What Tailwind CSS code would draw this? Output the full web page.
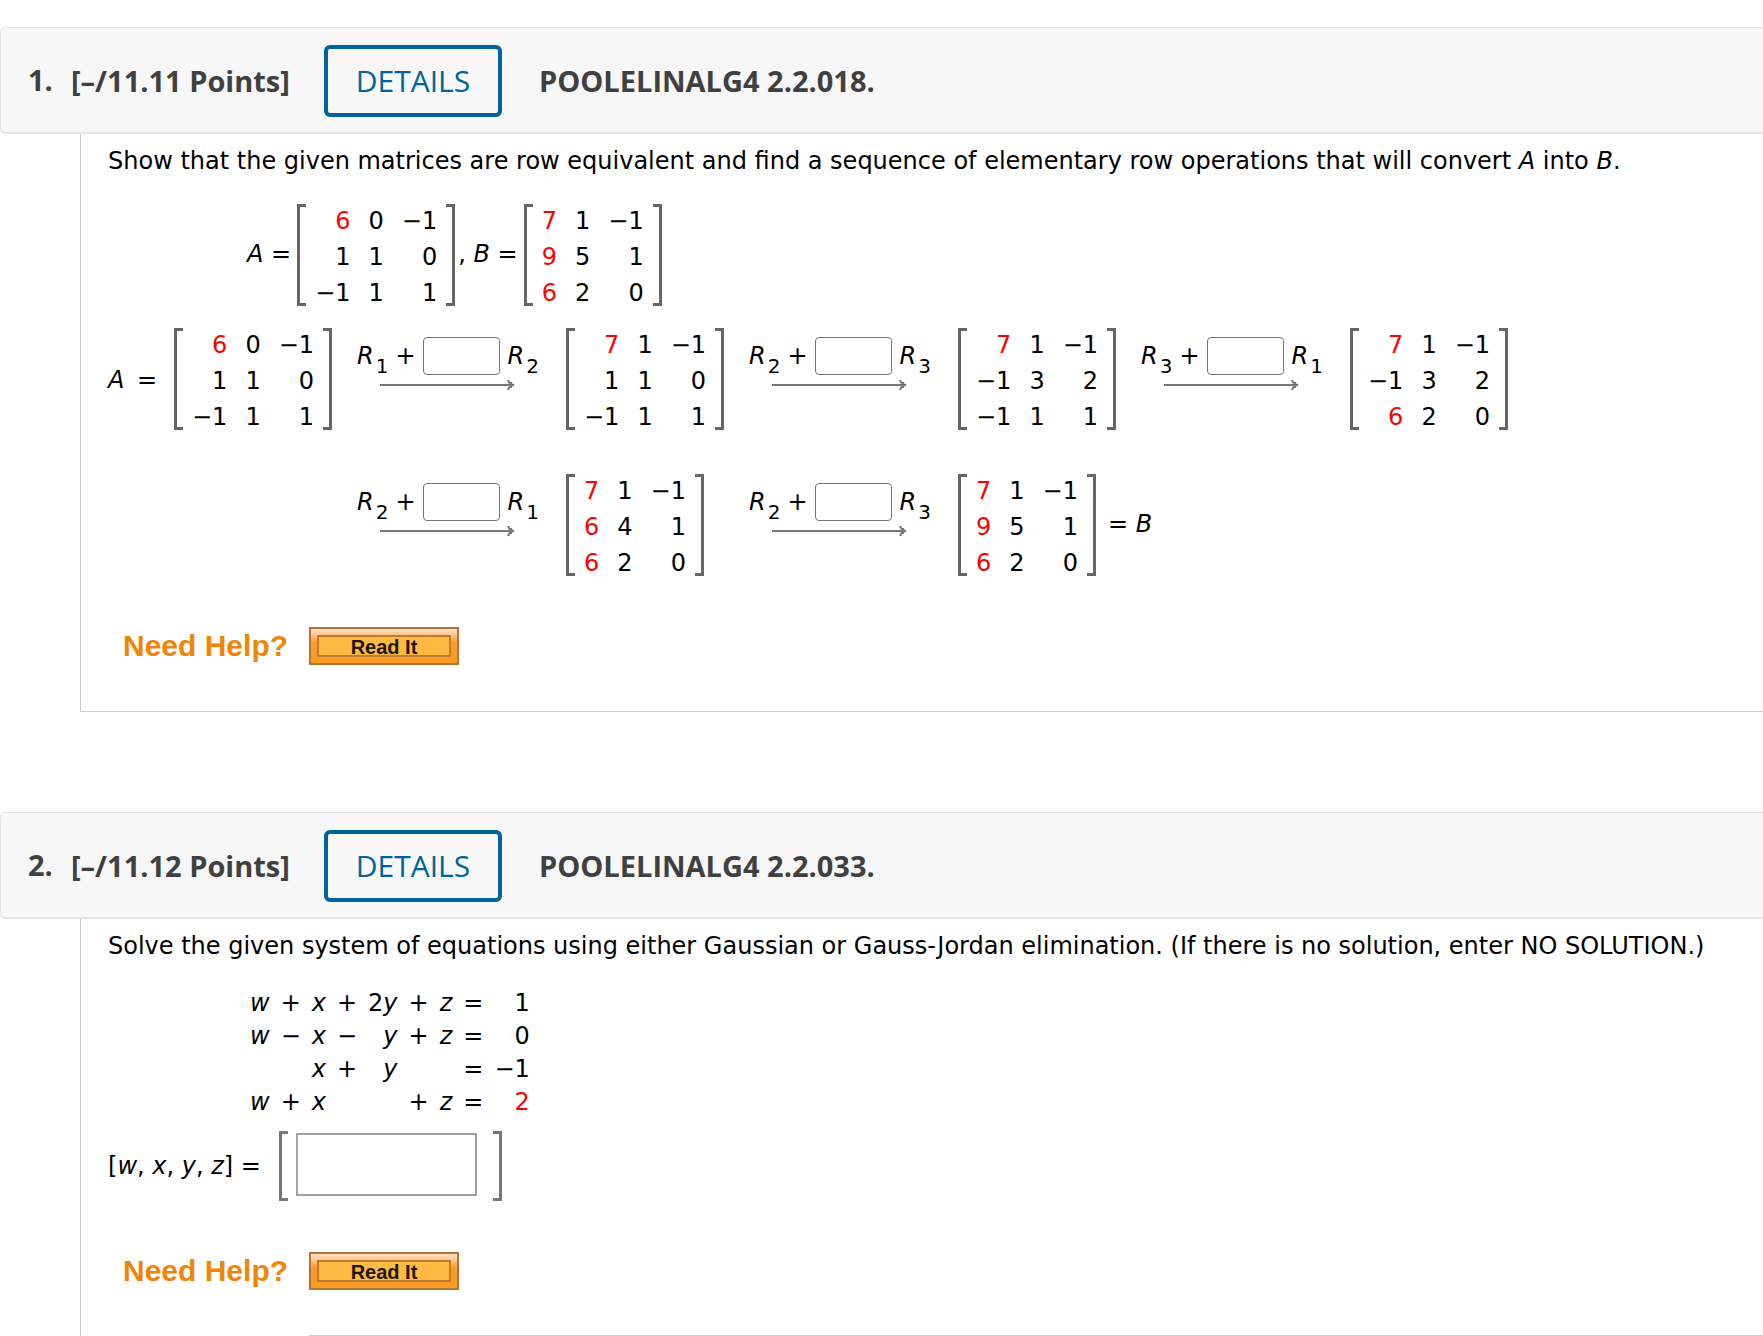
<!DOCTYPE html>
<html lang="en">
<head>
    <meta charset="UTF-8">
    <meta name="viewport" content="width=device-width, initial-scale=1.0">
    <title>Row Operations Homework</title>
    <script src="https://cdn.jsdelivr.net/npm/@tailwindcss/browser@4"></script>
</head>
<body class="bg-white text-black font-['DejaVu_Sans',Verdana,sans-serif] text-[24px] leading-[32px] overflow-x-hidden">
    <svg class="hidden">
        <symbol id="arrow" viewBox="0 0 136 12">
            <path d="M0 6H131" fill="none" stroke="#777" stroke-width="2"/>
            <path d="M128 1Q129 5 134 6Q129 7 128 11M131 3V9" fill="none" stroke="#777" stroke-width="2"/>
        </symbol>
    </svg>

    <main class="pt-[27px]">
        <!-- Question 1 -->
        <section>
            <header class="flex items-center h-[107px] pl-[27px] pt-[2px] bg-[#f7f7f7] border border-b-2 border-r-0 border-[#e4e4e4] rounded-l-[5px] font-['Open_Sans',sans-serif] text-[29px] font-bold text-[#404040] whitespace-nowrap">
                <span class="w-[43px] pb-[2px]">1.</span>
                <h2 class="w-[253px]">[–/11.11 Points]</h2>
                <button type="button" class="w-[178px] h-[72px] border-4 border-[#00639b] rounded-md text-[30px] font-normal text-[#00639b]">DETAILS</button>
                <span class="ml-[37px]">POOLELINALG4 2.2.018.</span>
            </header>
            <div class="ml-20 pl-[27px] pt-[11px] pb-[46px] border-l border-b border-[#ccc] whitespace-nowrap">
                <p>Show that the given matrices are row equivalent and find a sequence of elementary row operations that will convert <i>A</i> into <i>B</i>.</p>

                <div class="flex items-center ml-[139px] mt-[27px]">
                    <span class="mr-[6px] pb-[2px]"><i>A</i> =</span>
                    <div class="flex items-center h-[102px]">
                        <div class="w-[9px] h-full border-[3px] border-r-0 border-[#666]"></div>
                        <table class="mt-[3px] text-right leading-[36px] [&_td]:px-[9px]">
                            <tr><td class="text-[#f00]">6</td><td>0</td><td>−1</td></tr>
                            <tr><td>1</td><td>1</td><td>0</td></tr>
                            <tr><td>−1</td><td>1</td><td>1</td></tr>
                        </table>
                        <div class="w-[9px] h-full border-[3px] border-l-0 border-[#666]"></div>
                    </div>
                    <span class="ml-[3px] mr-[6px] pb-[2px]">, <i>B</i> =</span>
                    <div class="flex items-center h-[102px]">
                        <div class="w-[9px] h-full border-[3px] border-r-0 border-[#666]"></div>
                        <table class="mt-[3px] text-right leading-[36px] [&_td]:px-[9px]">
                            <tr><td class="text-[#f00]">7</td><td>1</td><td>−1</td></tr>
                            <tr><td class="text-[#f00]">9</td><td>5</td><td>1</td></tr>
                            <tr><td class="text-[#f00]">6</td><td>2</td><td>0</td></tr>
                        </table>
                        <div class="w-[9px] h-full border-[3px] border-l-0 border-[#666]"></div>
                    </div>
                </div>

                <!-- Row reduction steps -->
                <div class="grid grid-cols-[66px_183px_209px_183px_209px_183px_209px_183px] gap-y-11 mt-[22px] items-center">
                    <span class="pt-[2px]"><i class="mr-[5px]">A</i> =</span>
                    <div class="flex items-center h-[102px]">
                        <div class="w-[9px] h-full border-[3px] border-r-0 border-[#666]"></div>
                        <table class="mt-[3px] text-right leading-[36px] [&_td]:px-[9px]">
                            <tr><td class="text-[#f00]">6</td><td>0</td><td>−1</td></tr>
                            <tr><td>1</td><td>1</td><td>0</td></tr>
                            <tr><td>−1</td><td>1</td><td>1</td></tr>
                        </table>
                        <div class="w-[9px] h-full border-[3px] border-l-0 border-[#666]"></div>
                    </div>
                    <div class="w-[182px] self-start pt-[9px]">
                        <label class="flex items-center"><i>R</i><sub class="ml-[2px] mt-[10px] text-[20px] leading-none">1</sub><span class="mx-[7px]">+</span><input type="text" aria-label="Multiple of row 2" class="w-[77px] h-[38px] mr-2 border border-[#767676] rounded-[4px]"><i>R</i><sub class="ml-[2px] mt-[10px] text-[20px] leading-none">2</sub></label>
                        <svg class="w-[136px] h-3 mx-auto mt-1"><use href="#arrow"/></svg>
                    </div>
                    <div class="flex items-center h-[102px]">
                        <div class="w-[9px] h-full border-[3px] border-r-0 border-[#666]"></div>
                        <table class="mt-[3px] text-right leading-[36px] [&_td]:px-[9px]">
                            <tr><td class="text-[#f00]">7</td><td>1</td><td>−1</td></tr>
                            <tr><td>1</td><td>1</td><td>0</td></tr>
                            <tr><td>−1</td><td>1</td><td>1</td></tr>
                        </table>
                        <div class="w-[9px] h-full border-[3px] border-l-0 border-[#666]"></div>
                    </div>
                    <div class="w-[182px] self-start pt-[9px]">
                        <label class="flex items-center"><i>R</i><sub class="ml-[2px] mt-[10px] text-[20px] leading-none">2</sub><span class="mx-[7px]">+</span><input type="text" aria-label="Multiple of row 3" class="w-[77px] h-[38px] mr-2 border border-[#767676] rounded-[4px]"><i>R</i><sub class="ml-[2px] mt-[10px] text-[20px] leading-none">3</sub></label>
                        <svg class="w-[136px] h-3 mx-auto mt-1"><use href="#arrow"/></svg>
                    </div>
                    <div class="flex items-center h-[102px]">
                        <div class="w-[9px] h-full border-[3px] border-r-0 border-[#666]"></div>
                        <table class="mt-[3px] text-right leading-[36px] [&_td]:px-[9px]">
                            <tr><td class="text-[#f00]">7</td><td>1</td><td>−1</td></tr>
                            <tr><td>−1</td><td>3</td><td>2</td></tr>
                            <tr><td>−1</td><td>1</td><td>1</td></tr>
                        </table>
                        <div class="w-[9px] h-full border-[3px] border-l-0 border-[#666]"></div>
                    </div>
                    <div class="w-[182px] self-start pt-[9px]">
                        <label class="flex items-center"><i>R</i><sub class="ml-[2px] mt-[10px] text-[20px] leading-none">3</sub><span class="mx-[7px]">+</span><input type="text" aria-label="Multiple of row 1" class="w-[77px] h-[38px] mr-2 border border-[#767676] rounded-[4px]"><i>R</i><sub class="ml-[2px] mt-[10px] text-[20px] leading-none">1</sub></label>
                        <svg class="w-[136px] h-3 mx-auto mt-1"><use href="#arrow"/></svg>
                    </div>
                    <div class="flex items-center h-[102px]">
                        <div class="w-[9px] h-full border-[3px] border-r-0 border-[#666]"></div>
                        <table class="mt-[3px] text-right leading-[36px] [&_td]:px-[9px]">
                            <tr><td class="text-[#f00]">7</td><td>1</td><td>−1</td></tr>
                            <tr><td>−1</td><td>3</td><td>2</td></tr>
                            <tr><td class="text-[#f00]">6</td><td>2</td><td>0</td></tr>
                        </table>
                        <div class="w-[9px] h-full border-[3px] border-l-0 border-[#666]"></div>
                    </div>

                    <div class="col-start-3 w-[182px] self-start pt-[9px]">
                        <label class="flex items-center"><i>R</i><sub class="ml-[2px] mt-[10px] text-[20px] leading-none">2</sub><span class="mx-[7px]">+</span><input type="text" aria-label="Multiple of row 1, second step" class="w-[77px] h-[38px] mr-2 border border-[#767676] rounded-[4px]"><i>R</i><sub class="ml-[2px] mt-[10px] text-[20px] leading-none">1</sub></label>
                        <svg class="w-[136px] h-3 mx-auto mt-1"><use href="#arrow"/></svg>
                    </div>
                    <div class="flex items-center h-[102px]">
                        <div class="w-[9px] h-full border-[3px] border-r-0 border-[#666]"></div>
                        <table class="mt-[3px] text-right leading-[36px] [&_td]:px-[9px]">
                            <tr><td class="text-[#f00]">7</td><td>1</td><td>−1</td></tr>
                            <tr><td class="text-[#f00]">6</td><td>4</td><td>1</td></tr>
                            <tr><td class="text-[#f00]">6</td><td>2</td><td>0</td></tr>
                        </table>
                        <div class="w-[9px] h-full border-[3px] border-l-0 border-[#666]"></div>
                    </div>
                    <div class="w-[182px] self-start pt-[9px]">
                        <label class="flex items-center"><i>R</i><sub class="ml-[2px] mt-[10px] text-[20px] leading-none">2</sub><span class="mx-[7px]">+</span><input type="text" aria-label="Multiple of row 3, second step" class="w-[77px] h-[38px] mr-2 border border-[#767676] rounded-[4px]"><i>R</i><sub class="ml-[2px] mt-[10px] text-[20px] leading-none">3</sub></label>
                        <svg class="w-[136px] h-3 mx-auto mt-1"><use href="#arrow"/></svg>
                    </div>
                    <div class="col-span-2 flex items-center h-[102px]">
                        <div class="w-[9px] h-full border-[3px] border-r-0 border-[#666]"></div>
                        <table class="mt-[3px] text-right leading-[36px] [&_td]:px-[9px]">
                            <tr><td class="text-[#f00]">7</td><td>1</td><td>−1</td></tr>
                            <tr><td class="text-[#f00]">9</td><td>5</td><td>1</td></tr>
                            <tr><td class="text-[#f00]">6</td><td>2</td><td>0</td></tr>
                        </table>
                        <div class="w-[9px] h-full border-[3px] border-l-0 border-[#666]"></div>
                        <span class="ml-3 pb-[2px]">= <i>B</i></span>
                    </div>
                </div>

                <div class="flex items-center ml-[15px] mt-[51px] font-['Liberation_Sans',Arial,sans-serif] font-bold">
                    <span class="w-[186px] text-[30px] text-[#ef8508]">Need Help?</span>
                    <button type="button" class="w-[150px] h-[38px] p-[6px] border-2 border-[#b9732c] bg-linear-to-b from-[#ffe3cc] to-[#f99b2f] to-40%">
                        <span class="block h-full border-2 border-[#c07a28] bg-[#fdbb44] text-[20px] leading-[20px] text-[#1f1600]">Read It</span>
                    </button>
                </div>
            </div>
        </section>

        <!-- Question 2 -->
        <section class="mt-[100px]">
            <header class="flex items-center h-[107px] pl-[27px] pt-[2px] bg-[#f7f7f7] border border-b-2 border-r-0 border-[#e4e4e4] rounded-l-[5px] font-['Open_Sans',sans-serif] text-[29px] font-bold text-[#404040] whitespace-nowrap">
                <span class="w-[43px] pb-[2px]">2.</span>
                <h2 class="w-[253px]">[–/11.12 Points]</h2>
                <button type="button" class="w-[178px] h-[72px] border-4 border-[#00639b] rounded-md text-[30px] font-normal text-[#00639b]">DETAILS</button>
                <span class="ml-[37px]">POOLELINALG4 2.2.033.</span>
            </header>
            <div class="ml-20 pl-[27px] pt-[11px] border-l border-[#ccc] whitespace-nowrap">
                <p>Solve the given system of equations using either Gaussian or Gauss-Jordan elimination. (If there is no solution, enter NO SOLUTION.)</p>

                <table class="ml-[142px] mt-[25px] text-right leading-[33px] [&_td]:pl-[11px] [&_td:first-child]:pl-0">
                    <tr><td><i>w</i></td><td>+</td><td><i>x</i></td><td>+</td><td>2<i>y</i></td><td>+</td><td><i>z</i></td><td>=</td><td>1</td></tr>
                    <tr><td><i>w</i></td><td>−</td><td><i>x</i></td><td>−</td><td><i>y</i></td><td>+</td><td><i>z</i></td><td>=</td><td>0</td></tr>
                    <tr><td></td><td></td><td><i>x</i></td><td>+</td><td><i>y</i></td><td></td><td></td><td>=</td><td>−1</td></tr>
                    <tr><td><i>w</i></td><td>+</td><td><i>x</i></td><td></td><td></td><td>+</td><td><i>z</i></td><td>=</td><td class="text-[#f00]">2</td></tr>
                </table>

                <label class="flex items-center h-[70px] mt-3">
                    <span class="w-[171px]">[<i>w</i>, <i>x</i>, <i>y</i>, <i>z</i>] =</span>
                    <span class="w-[9px] h-full border-[3px] border-r-0 border-[#777]"></span>
                    <input type="text" class="w-[181px] h-[63px] ml-2 mr-4 mb-[3px] border-2 border-[#a0a0a0]">
                    <span class="w-[9px] h-full border-[3px] border-l-0 border-[#777]"></span>
                </label>

                <div class="flex items-center ml-[15px] mt-[51px] font-['Liberation_Sans',Arial,sans-serif] font-bold">
                    <span class="w-[186px] text-[30px] text-[#ef8508]">Need Help?</span>
                    <button type="button" class="w-[150px] h-[38px] p-[6px] border-2 border-[#b9732c] bg-linear-to-b from-[#ffe3cc] to-[#f99b2f] to-40%">
                        <span class="block h-full border-2 border-[#c07a28] bg-[#fdbb44] text-[20px] leading-[20px] text-[#1f1600]">Read It</span>
                    </button>
                </div>
                <hr class="ml-[201px] mt-[45px] border-[#ccc]">
            </div>
        </section>
    </main>
</body>
</html>
